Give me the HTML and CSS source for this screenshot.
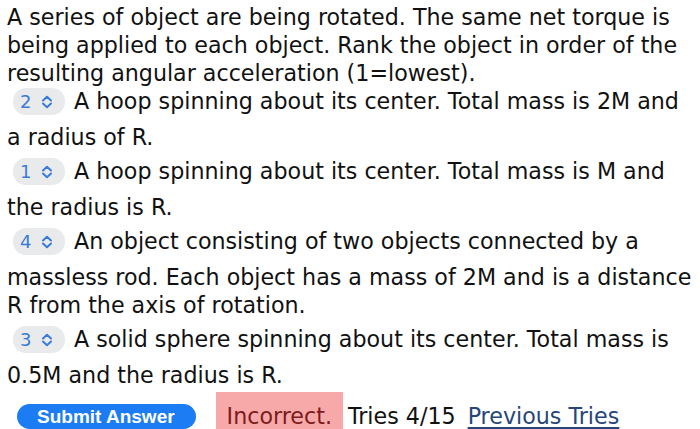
FILE: index.html
```html
<!DOCTYPE html>
<html>
<head>
<meta charset="utf-8">
<link rel="stylesheet" href="styles.css">
</head>
<body>
<div class="question">
  <p class="prompt">A series of object are being rotated. The same net torque is<br>being applied to each object. Rank the object in order of the<br>resulting angular acceleration (1=lowest).</p>
  <div class="item"><span class="select"><span class="num">2</span><svg class="chev" viewBox="0 0 12 14" width="12" height="14"><polyline points="2,5.5 6,1.8 10,5.5"/><polyline points="2,8.5 6,12.2 10,8.5"/></svg></span>A hoop spinning about its center. Total mass is 2M and<br>a radius of R.</div>
  <div class="item"><span class="select"><span class="num">1</span><svg class="chev" viewBox="0 0 12 14" width="12" height="14"><polyline points="2,5.5 6,1.8 10,5.5"/><polyline points="2,8.5 6,12.2 10,8.5"/></svg></span>A hoop spinning about its center. Total mass is M and<br>the radius is R.</div>
  <div class="item"><span class="select"><span class="num">4</span><svg class="chev" viewBox="0 0 12 14" width="12" height="14"><polyline points="2,5.5 6,1.8 10,5.5"/><polyline points="2,8.5 6,12.2 10,8.5"/></svg></span>An object consisting of two objects connected by a<br>massless rod. Each object has a mass of 2M and is a distance<br>R from the axis of rotation.</div>
  <div class="item"><span class="select"><span class="num">3</span><svg class="chev" viewBox="0 0 12 14" width="12" height="14"><polyline points="2,5.5 6,1.8 10,5.5"/><polyline points="2,8.5 6,12.2 10,8.5"/></svg></span>A solid sphere spinning about its center. Total mass is<br>0.5M and the radius is R.</div>
  <div class="actions">
    <button class="submit">Submit Answer</button>
    <span class="incorrect">Incorrect.</span>
    <span class="tries">Tries 4/15</span>
    <a class="prev" href="#">Previous Tries</a>
  </div>
</div>
</body>
</html>
```
FILE: styles.css
```css
html, body {
  margin: 0;
  padding: 0;
  background: #fff;
}
body {
  font-family: "DejaVu Sans", Verdana, sans-serif;
  font-size: 22.2px;
  color: #111;
  overflow: hidden;
}
.question {
  padding: 3px 7px 0 7px;
}
.prompt {
  margin: 0 0 -6px 0;
  line-height: 28px;
}
.item {
  line-height: 28px;
}
.select {
  display: inline-flex;
  align-items: center;
  box-sizing: border-box;
  height: 27px;
  width: 52px;
  margin: 7px 9px 8px 6px;
  padding-left: 7px;
  gap: 10px;
  border-radius: 13px;
  background: #e9eaec;
  vertical-align: middle;
  font-family: "DejaVu Sans", sans-serif;
  font-size: 18px;
  color: #3b7bd6;
}
.chev polyline {
  fill: none;
  stroke: #3b7bd6;
  stroke-width: 2;
  stroke-linecap: round;
  stroke-linejoin: round;
}
.actions {
  display: flex;
  align-items: center;
  margin-top: 3px;
}
.submit {
  font-family: "Liberation Sans", Arial, sans-serif;
  font-weight: bold;
  font-size: 19px;
  color: #fff;
  background: #1b7cf3;
  border: none;
  border-radius: 13px;
  height: 25px;
  padding: 0 21px 0 20px;
  margin-left: 10px;
  line-height: 25px;
}
.incorrect {
  background: #f7a8a8;
  color: #7c1b1b;
  line-height: 28px;
  padding: 10px 11px;
  margin-left: 20px;
}
.tries {
  margin-left: 5px;
}
.prev {
  margin-left: 12px;
  color: #27467a;
  text-decoration: underline;
  text-underline-offset: 3px;
}
```
